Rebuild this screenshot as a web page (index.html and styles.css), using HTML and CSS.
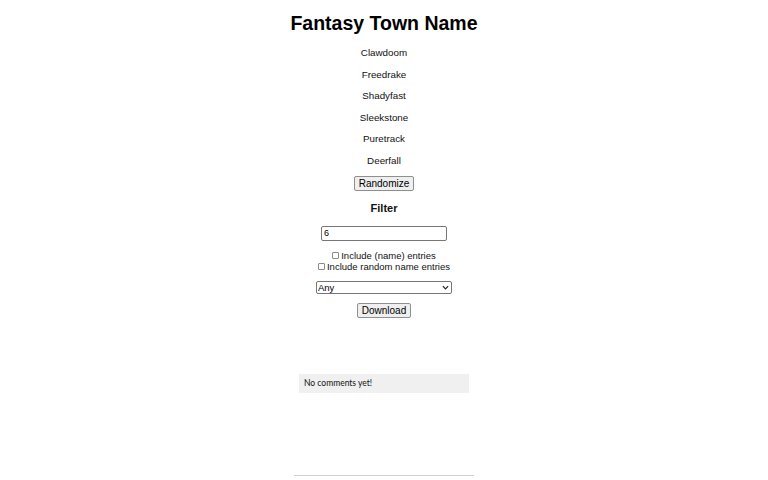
FILE: index.html
```html
<!DOCTYPE html>
<html lang="en">
<head>
<meta charset="utf-8">
<title>Fantasy Town Name</title>
<link rel="stylesheet" href="styles.css">
</head>
<body>
<main class="page">
  <h1 class="title">Fantasy Town Name</h1>
  <div class="names">
    <p class="name">Clawdoom</p>
    <p class="name">Freedrake</p>
    <p class="name">Shadyfast</p>
    <p class="name">Sleekstone</p>
    <p class="name">Puretrack</p>
    <p class="name">Deerfall</p>
  </div>
  <button class="btn btn-randomize" type="button">Randomize</button>
  <h3 class="filter-title">Filter</h3>
  <input class="filter-input" type="text" value="6">
  <div class="checks">
    <label class="check"><input type="checkbox"><span>Include (name) entries</span></label>
    <label class="check"><input type="checkbox"><span>Include random name entries</span></label>
  </div>
  <div class="select-wrap">
    <select class="filter-select">
      <option>Any</option>
    </select>
    <svg class="select-arrow" viewBox="0 0 8 5" width="7" height="5" aria-hidden="true">
      <path d="M1 1 L4 4 L7 1" fill="none" stroke="#222" stroke-width="1.4"/>
    </svg>
  </div>
  <button class="btn btn-download" type="button">Download</button>
  <section class="comments">
    <div class="comment-box">No comments yet!</div>
  </section>
  <hr class="rule">
</main>
</body>
</html>
```

FILE: styles.css
```css
html, body {
  margin: 0;
  padding: 0;
  background: #fff;
}

body {
  font-family: "Liberation Sans", Arial, sans-serif;
  color: #111;
}

.page {
  display: flex;
  flex-direction: column;
  align-items: center;
  text-align: center;
}

.title {
  font-size: 19.5px;
  line-height: 24px;
  font-weight: bold;
  margin: 11px 0 0;
  color: #000;
}

.names {
  margin-top: 12px;
  display: flex;
  flex-direction: column;
  align-items: center;
}

.name {
  margin: 0 0 9.6px;
  font-size: 9.8px;
  line-height: 12px;
  color: #111;
}

.name:last-child {
  margin-bottom: 8.6px;
}

.btn {
  font-family: "Liberation Sans", Arial, sans-serif;
  font-size: 10px;
  line-height: 11px;
  height: 15px;
  padding: 0 3px;
  border: 1px solid #8f8f8f;
  border-radius: 2px;
  background: #efefef;
  color: #000;
}

.btn-randomize {
  margin-top: 0.4px;
  width: 60px;
}

.filter-title {
  font-size: 11px;
  line-height: 14px;
  font-weight: bold;
  margin: 10px 0 0;
}

.filter-input {
  margin-top: 11px;
  box-sizing: border-box;
  width: 126px;
  height: 15px;
  padding: 0 2px;
  font-family: "Liberation Sans", Arial, sans-serif;
  font-size: 9px;
  border: 1px solid #767676;
  border-radius: 2px;
}

.checks {
  margin-top: 9px;
  display: flex;
  flex-direction: column;
  align-items: center;
}

.check {
  display: flex;
  align-items: center;
  font-size: 9.5px;
  line-height: 11px;
  color: #111;
}

.check input {
  appearance: none;
  -webkit-appearance: none;
  box-sizing: border-box;
  margin: 0 2px 0 0;
  width: 7px;
  height: 7px;
  border: 1px solid #8a8a8a;
  border-radius: 1px;
  background: #fff;
}

.select-wrap {
  position: relative;
  margin-top: 9px;
  width: 136px;
  height: 13px;
}

.filter-select {
  appearance: none;
  -webkit-appearance: none;
  box-sizing: border-box;
  display: block;
  width: 136px;
  height: 13px;
  padding: 0 0 0 1px;
  font-family: "Liberation Sans", Arial, sans-serif;
  font-size: 9.5px;
  line-height: 11px;
  color: #000;
  border: 1px solid #767676;
  border-radius: 2px;
  background: #fff;
  text-align: left;
}

.select-arrow {
  position: absolute;
  right: 3px;
  top: 4px;
  pointer-events: none;
}

.btn-download {
  margin-top: 9px;
  width: 54px;
}

.comments {
  margin-top: 56px;
  width: 170px;
}

.comment-box {
  background: #f0f0f0;
  height: 19px;
  line-height: 19px;
  padding: 0 5px;
  text-align: left;
  font-family: Lato, "Open Sans", sans-serif;
  font-size: 8.5px;
  color: #111;
}

.rule {
  margin: 82px 0 0;
  width: 180px;
  border: 0;
  border-top: 1px solid #d0d0d0;
}
```
